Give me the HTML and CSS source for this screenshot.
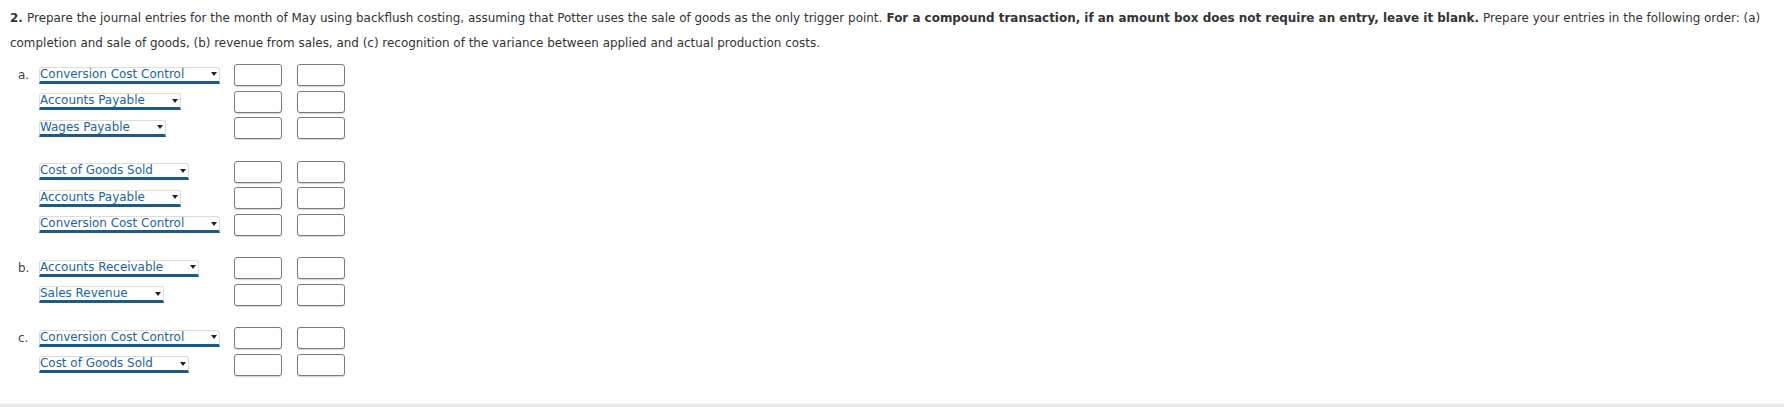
FILE: index.html
```html
<!DOCTYPE html>
<html lang="en">
<head>
<meta charset="utf-8">
<title>Journal entries</title>
<link rel="stylesheet" href="styles.css">
</head>
<body>
<div class="page">
  <p class="prompt"><strong>2. </strong>Prepare the journal entries for the month of May using backflush costing, assuming that Potter uses the sale of goods as the only trigger point.<strong> For a compound transaction, if an amount box does not require an entry, leave it blank. </strong>Prepare your entries in the following order: (a) completion and sale of goods, (b) revenue from sales, and (c) recognition of the variance between applied and actual production costs.</p>

  <div class="journal">
    <div class="group">
      <div class="row"><span class="label">a.</span><span class="dropdown"><span class="dd-text">Conversion Cost Control</span><span class="dd-arrow"></span></span><span class="amount"></span><span class="amount"></span></div>
      <div class="row"><span class="label"></span><span class="dropdown"><span class="dd-text">Accounts Payable</span><span class="dd-arrow"></span></span><span class="amount"></span><span class="amount"></span></div>
      <div class="row"><span class="label"></span><span class="dropdown"><span class="dd-text">Wages Payable</span><span class="dd-arrow"></span></span><span class="amount"></span><span class="amount"></span></div>
    </div>
    <div class="group">
      <div class="row"><span class="label"></span><span class="dropdown"><span class="dd-text">Cost of Goods Sold</span><span class="dd-arrow"></span></span><span class="amount"></span><span class="amount"></span></div>
      <div class="row"><span class="label"></span><span class="dropdown"><span class="dd-text">Accounts Payable</span><span class="dd-arrow"></span></span><span class="amount"></span><span class="amount"></span></div>
      <div class="row"><span class="label"></span><span class="dropdown"><span class="dd-text">Conversion Cost Control</span><span class="dd-arrow"></span></span><span class="amount"></span><span class="amount"></span></div>
    </div>
    <div class="group">
      <div class="row"><span class="label">b.</span><span class="dropdown"><span class="dd-text">Accounts Receivable</span><span class="dd-arrow"></span></span><span class="amount"></span><span class="amount"></span></div>
      <div class="row"><span class="label"></span><span class="dropdown"><span class="dd-text">Sales Revenue</span><span class="dd-arrow"></span></span><span class="amount"></span><span class="amount"></span></div>
    </div>
    <div class="group">
      <div class="row"><span class="label">c.</span><span class="dropdown"><span class="dd-text">Conversion Cost Control</span><span class="dd-arrow"></span></span><span class="amount"></span><span class="amount"></span></div>
      <div class="row"><span class="label"></span><span class="dropdown"><span class="dd-text">Cost of Goods Sold</span><span class="dd-arrow"></span></span><span class="amount"></span><span class="amount"></span></div>
    </div>
  </div>
</div>
<div class="bottom-edge"></div>
</body>
</html>
```

FILE: styles.css
```css
html, body {
  margin: 0;
  padding: 0;
  background: #ffffff;
}

body {
  font-family: "DejaVu Sans", Verdana, sans-serif;
  font-size: 11.95px;
  color: #333333;
  height: 407px;
  display: flex;
  flex-direction: column;
}

.page {
  flex: 1;
  padding: 6px 10px 0 10px;
}

.prompt {
  margin: 0;
  line-height: 25px;
}

.prompt strong {
  font-weight: bold;
  color: #333333;
}

.journal {
  margin-top: 8px;
  display: flex;
  flex-direction: column;
  gap: 21.5px;
}

.group {
  display: flex;
  flex-direction: column;
  gap: 4.5px;
}

.row {
  display: grid;
  grid-template-columns: 21px 195px 48px 63px;
  align-items: center;
  height: 22px;
  margin-left: 8px;
}

.row .amount + .amount {
  margin-left: 15px;
}

.label {
  color: #444444;
}

.dropdown {
  justify-self: start;
  display: inline-flex;
  align-items: center;
  height: 13px;
  border: 1px solid #dcdcdc;
  border-bottom: 3px solid #1c5a8c;
  border-radius: 3px 3px 0 0;
  padding-right: 2px;
  color: #1e63a3;
  line-height: 13px;
  background: #ffffff;
}

.dd-text {
  padding-right: 27px;
}

.dd-arrow {
  width: 0;
  height: 0;
  border-left: 3px solid transparent;
  border-right: 3px solid transparent;
  border-top: 4px solid #222222;
}

.amount {
  display: block;
  width: 46px;
  height: 20px;
  border: 1px solid #7b7b7b;
  border-radius: 3px;
  box-shadow: 0 1px 1px rgba(0, 0, 0, 0.18);
  background: #ffffff;
}

.bottom-edge {
  height: 4px;
  background: linear-gradient(#f4f4f4, #e4e4e4);
}
```
